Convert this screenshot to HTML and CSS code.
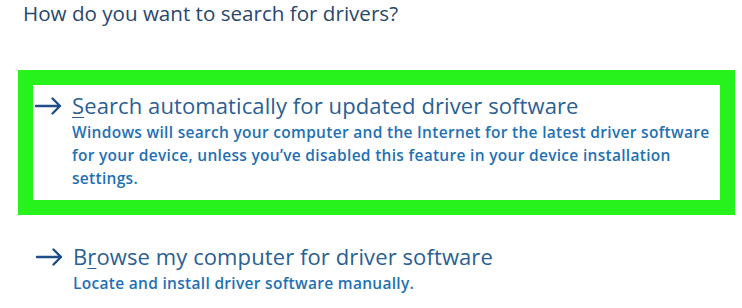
FILE: index.html
```html
<!DOCTYPE html>
<html>
<head>
<meta charset="utf-8">
<link rel="stylesheet" href="styles.css">
</head>
<body>
<div class="page">
  <h1 class="heading">How do you want to search for drivers?</h1>
  <div class="highlight">
    <div class="option">
      <span class="arrow"><svg width="29" height="20" viewBox="0 0 29 20"><path d="M2 10 H26 M18.5 2.5 L26 10 L18.5 17.5" fill="none" stroke="#1f4e86" stroke-width="2.4" stroke-linecap="round" stroke-linejoin="round"/></svg></span>
      <div class="text">
        <div class="title"><u>S</u>earch automatically for updated driver software</div>
        <div class="desc">Windows will search your computer and the Internet for the latest driver software for your device, unless you’ve disabled this feature in your device installation settings.</div>
      </div>
    </div>
  </div>
  <div class="option plain">
    <span class="arrow"><svg width="29" height="20" viewBox="0 0 29 20"><path d="M2 10 H26 M18.5 2.5 L26 10 L18.5 17.5" fill="none" stroke="#1f4e86" stroke-width="2.4" stroke-linecap="round" stroke-linejoin="round"/></svg></span>
    <div class="text">
      <div class="title">B<u>r</u>owse my computer for driver software</div>
      <div class="desc">Locate and install driver software manually.</div>
    </div>
  </div>
</div>
</body>
</html>
```
FILE: styles.css
```css
html, body {
  margin: 0;
  padding: 0;
  background: #ffffff;
}
.page {
  width: 742px;
  height: 308px;
  overflow: hidden;
  font-family: "Open Sans", "Noto Sans", sans-serif;
}
.heading {
  margin: 0;
  padding: 2px 0 0 23px;
  font-size: 20.6px;
  font-weight: 400;
  line-height: 23px;
  color: #28476b;
}
.highlight {
  margin: 45px 0 0 18px;
  width: 687px;
  height: 115px;
  border: 15px solid #28f21c;
  box-sizing: content-box;
}
.option {
  display: flex;
  align-items: flex-start;
  padding: 5px 0 0 2px;
}
.option.plain {
  margin-left: 33px;
  padding-top: 26px;
}
.highlight .option {
  padding-left: 1px;
}
.arrow {
  width: 38px;
  flex: none;
  padding-top: 6px;
}
.arrow svg {
  display: block;
}
.title {
  font-size: 22px;
  line-height: 30px;
  color: #2a5f93;
  letter-spacing: 0.1px;
}
.title u {
  text-underline-offset: 3px;
  text-decoration-thickness: 1px;
}
.desc {
  margin-top: 1px;
  font-size: 15.5px;
  font-weight: 600;
  line-height: 23px;
  color: #1f71b3;
  letter-spacing: 0.3px;
  max-width: 660px;
}
```
